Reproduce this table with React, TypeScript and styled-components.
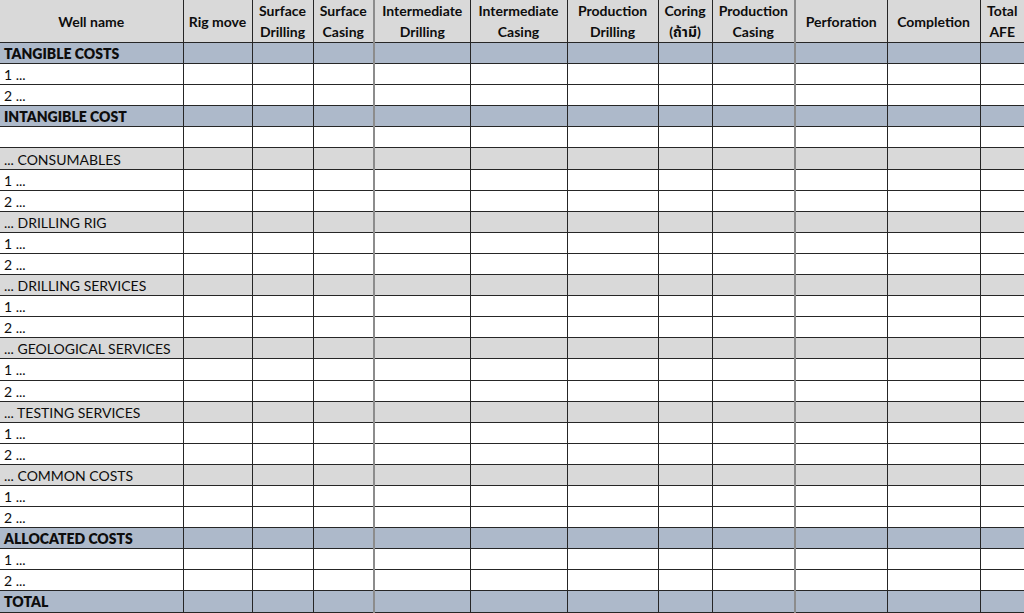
import React from 'react';
import styled, { createGlobalStyle } from 'styled-components';

const GlobalStyle = createGlobalStyle`
  html, body {
    margin: 0;
    padding: 0;
    background: #ffffff;
  }
  body {
    font-family: Lato, "Noto Sans", "Noto Sans Thai", "DejaVu Sans", sans-serif;
  }
`;

const columns = [
  { label: ['Well name'], width: 183 },
  { label: ['Rig move'], width: 69 },
  { label: ['Surface', 'Drilling'], width: 61 },
  { label: ['Surface', 'Casing'], width: 61 },
  { label: ['Intermediate', 'Drilling'], width: 96 },
  { label: ['Intermediate', 'Casing'], width: 97 },
  { label: ['Production', 'Drilling'], width: 91 },
  { label: ['Coring', '(ถ้ามี)'], width: 54 },
  { label: ['Production', 'Casing'], width: 83 },
  { label: ['Perforation'], width: 92 },
  { label: ['Completion'], width: 93 },
  { label: ['Total', 'AFE'], width: 44 },
];

// columns whose left edge is drawn in grey instead of black
const greyEdge = [4, 9];

type Kind = 'section' | 'group' | 'item';

const rows: { text: string; kind: Kind }[] = [
  { text: 'TANGIBLE COSTS', kind: 'section' },
  { text: '1 ...', kind: 'item' },
  { text: '2 ...', kind: 'item' },
  { text: 'INTANGIBLE COST', kind: 'section' },
  { text: '', kind: 'item' },
  { text: '... CONSUMABLES', kind: 'group' },
  { text: '1 ...', kind: 'item' },
  { text: '2 ...', kind: 'item' },
  { text: '... DRILLING RIG', kind: 'group' },
  { text: '1 ...', kind: 'item' },
  { text: '2 ...', kind: 'item' },
  { text: '... DRILLING SERVICES', kind: 'group' },
  { text: '1 ...', kind: 'item' },
  { text: '2 ...', kind: 'item' },
  { text: '... GEOLOGICAL SERVICES', kind: 'group' },
  { text: '1 ...', kind: 'item' },
  { text: '2 ...', kind: 'item' },
  { text: '... TESTING SERVICES', kind: 'group' },
  { text: '1 ...', kind: 'item' },
  { text: '2 ...', kind: 'item' },
  { text: '... COMMON COSTS', kind: 'group' },
  { text: '1 ...', kind: 'item' },
  { text: '2 ...', kind: 'item' },
  { text: 'ALLOCATED COSTS', kind: 'section' },
  { text: '1 ...', kind: 'item' },
  { text: '2 ...', kind: 'item' },
  { text: 'TOTAL', kind: 'section' },
];

const fills: Record<Kind, string> = {
  section: '#adb9ca',
  group: '#d9d9d9',
  item: '#ffffff',
};

const Sheet = styled.table`
  width: 1024px;
  table-layout: fixed;
  border-collapse: collapse;
  border-spacing: 0;
  color: #000;
  font-size: 14px;
`;

const HeadRow = styled.tr`
  height: 42px;
  background: #d9d9d9;
`;

const HeadCell = styled.th<{ $grey?: boolean; $first?: boolean }>`
  padding: 0 1px;
  font-weight: 700;
  font-size: 14px;
  line-height: 21px;
  text-align: center;
  vertical-align: middle;
  white-space: nowrap;
  overflow: hidden;
  color: #0d0d0d;
  border-bottom: 1px solid #262626;
  border-left: ${(p) =>
    p.$first ? 'none' : p.$grey ? '2px solid #8c8c8c' : '1px solid #262626'};
`;

const BodyRow = styled.tr<{ $kind: Kind }>`
  height: 21.1px;
  background: ${(p) => fills[p.$kind]};
`;

const Cell = styled.td<{ $grey?: boolean; $first?: boolean }>`
  padding: 1px 3px 0 4px;
  height: 19px;
  line-height: 19px;
  white-space: nowrap;
  overflow: hidden;
  border-bottom: 1px solid #262626;
  border-left: ${(p) =>
    p.$first ? 'none' : p.$grey ? '2px solid #8c8c8c' : '1px solid #262626'};
`;

const Label = styled.span<{ $kind: Kind }>`
  font-weight: ${(p) => (p.$kind === 'section' ? 800 : 400)};
  font-size: 14px;
  color: #0d0d0d;
`;

export default function App() {
  return (
    <>
      <GlobalStyle />
      <Sheet>
        <colgroup>
          {columns.map((c, i) => (
            <col key={i} style={{ width: c.width }} />
          ))}
        </colgroup>
        <thead>
          <HeadRow>
            {columns.map((c, i) => (
              <HeadCell key={i} $first={i === 0} $grey={greyEdge.includes(i)}>
                {c.label.map((l, j) => (
                  <div key={j}>{l}</div>
                ))}
              </HeadCell>
            ))}
          </HeadRow>
        </thead>
        <tbody>
          {rows.map((r, ri) => (
            <BodyRow key={ri} $kind={r.kind}>
              {columns.map((_, ci) => (
                <Cell key={ci} $first={ci === 0} $grey={greyEdge.includes(ci)}>
                  {ci === 0 && <Label $kind={r.kind}>{r.text}</Label>}
                </Cell>
              ))}
            </BodyRow>
          ))}
        </tbody>
      </Sheet>
    </>
  );
}
